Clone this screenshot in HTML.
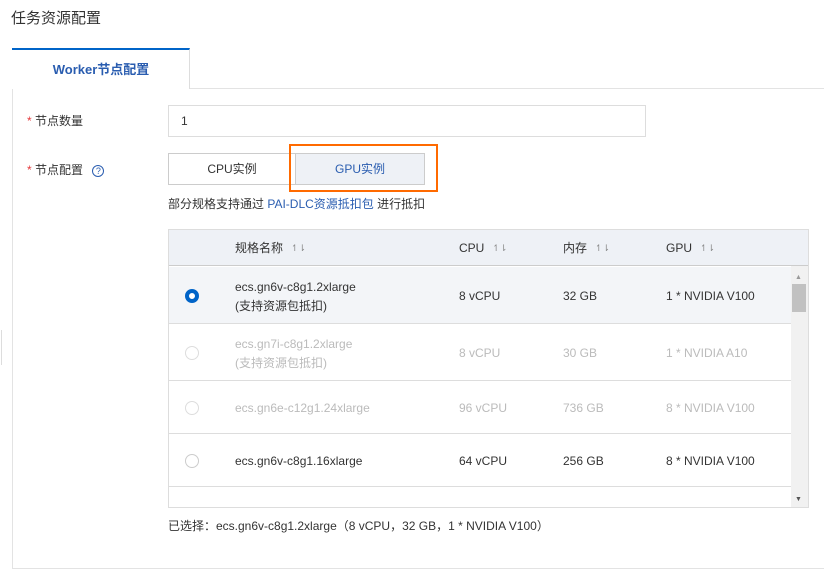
<!DOCTYPE html><html><head><meta charset="utf-8"><style>
*{box-sizing:border-box;margin:0;padding:0}
body{width:824px;height:577px;background:#fff;font-family:"Liberation Sans","Noto Sans CJK SC",sans-serif;font-size:12px;line-height:16px;color:#333;position:relative;overflow:hidden}
.a{position:absolute}
.t{white-space:nowrap}
.g{color:#bbb}
.radio{width:14px;height:14px;border:1px solid #ccc;border-radius:50%;position:absolute;left:185px;background:#fff}
.sort{font-size:9px;color:#888;margin-left:8px;font-family:"Liberation Sans",sans-serif;display:inline-block;vertical-align:top;line-height:16px}
.h{height:16px;line-height:16px}
</style></head><body>
<div class="a t" style="left:11px;top:9px;font-size:15px;line-height:20px;color:#333">任务资源配置</div>
<div class="a" style="left:12px;top:48px;width:178px;height:41px;border-top:2px solid #0064c8;border-right:1px solid #ddd;background:#fff;z-index:2"></div>
<div class="a t" style="left:12px;top:62px;width:178px;text-align:center;font-size:13px;font-weight:bold;color:#2a5db0;z-index:3">Worker节点配置</div>
<div class="a" style="left:190px;top:88px;width:640px;border-top:1px solid #e3e3e3"></div>
<div class="a" style="left:12px;top:48px;width:820px;height:521px;border-left:1px solid #e3e3e3;border-bottom:1px solid #e3e3e3"></div>
<div class="a" style="left:0;top:330px;width:2px;height:35px;border-right:1px solid #ddd"></div>
<div class="a t" style="left:27px;top:113px"><span style="color:#e4393c">*</span> 节点数量</div>
<div class="a" style="left:168px;top:105px;width:478px;height:32px;border:1px solid #ddd"></div>
<div class="a t" style="left:181px;top:113px">1</div>
<div class="a t" style="left:27px;top:162px"><span style="color:#e4393c">*</span> 节点配置 <span style="display:inline-block;width:12px;height:12px;border:1px solid #2a5db0;border-radius:50%;color:#2a5db0;font-size:9px;text-align:center;line-height:11px;margin-left:6px;vertical-align:middle">?</span></div>
<div class="a" style="left:168px;top:153px;width:128px;height:32px;border:1px solid #ccc;text-align:center;line-height:30px">CPU实例</div>
<div class="a" style="left:295px;top:153px;width:130px;height:32px;border:1px solid #ccc;background:#eef1f6;text-align:center;line-height:30px;color:#2a5db0">GPU实例</div>
<div class="a" style="left:289px;top:144px;width:149px;height:48px;border:2px solid #ff6a00"></div>
<div class="a t" style="left:168px;top:196px">部分规格支持通过 <span style="color:#2a5db0">PAI-DLC资源抵扣包</span> 进行抵扣</div>
<div class="a" style="left:168px;top:229px;width:641px;height:279px;border:1px solid #ddd"></div>
<div class="a" style="left:169px;top:230px;width:639px;height:36px;background:#eef1f6;border-bottom:1px solid #ccc"></div>
<div class="a t h" style="left:235px;top:240px">规格名称<span class="sort">↿⇂</span></div>
<div class="a t h" style="left:459px;top:240px">CPU<span class="sort">↿⇂</span></div>
<div class="a t h" style="left:563px;top:240px">内存<span class="sort">↿⇂</span></div>
<div class="a t h" style="left:666px;top:240px">GPU<span class="sort">↿⇂</span></div>
<div class="a" style="left:169px;top:267px;width:622px;height:56px;background:#f3f5f8"></div>
<div class="a" style="left:169px;top:323px;width:622px;border-top:1px solid #ddd"></div>
<div class="a" style="left:169px;top:380px;width:622px;border-top:1px solid #ddd"></div>
<div class="a" style="left:169px;top:433px;width:622px;border-top:1px solid #ddd"></div>
<div class="a" style="left:169px;top:486px;width:622px;border-top:1px solid #ddd"></div>
<div class="a" style="left:791px;top:266px;width:17px;height:241px;background:#f1f1f1"></div>
<div class="a" style="left:792px;top:284px;width:14px;height:28px;background:#c1c1c1"></div>
<div class="a" style="left:795px;top:270px;font-size:7px;color:#999">▲</div>
<div class="a" style="left:795px;top:492px;font-size:7px;color:#555">▼</div>
<div class="radio" style="top:289px;border:4px solid #0064c8"></div>
<div class="a t" style="left:235px;top:278px;line-height:19px">ecs.gn6v-c8g1.2xlarge<br>(支持资源包抵扣)</div>
<div class="a t" style="left:459px;top:288px">8 vCPU</div><div class="a t" style="left:563px;top:288px">32 GB</div><div class="a t" style="left:666px;top:288px">1 * NVIDIA V100</div>
<div class="radio" style="top:346px;border-color:#ddd"></div>
<div class="a t g" style="left:235px;top:335px;line-height:19px">ecs.gn7i-c8g1.2xlarge<br>(支持资源包抵扣)</div>
<div class="a t g" style="left:459px;top:345px">8 vCPU</div><div class="a t g" style="left:563px;top:345px">30 GB</div><div class="a t g" style="left:666px;top:345px">1 * NVIDIA A10</div>
<div class="radio" style="top:401px;border-color:#ddd"></div>
<div class="a t g" style="left:235px;top:400px">ecs.gn6e-c12g1.24xlarge</div>
<div class="a t g" style="left:459px;top:400px">96 vCPU</div><div class="a t g" style="left:563px;top:400px">736 GB</div><div class="a t g" style="left:666px;top:400px">8 * NVIDIA V100</div>
<div class="radio" style="top:454px"></div>
<div class="a t" style="left:235px;top:453px">ecs.gn6v-c8g1.16xlarge</div>
<div class="a t" style="left:459px;top:453px">64 vCPU</div><div class="a t" style="left:563px;top:453px">256 GB</div><div class="a t" style="left:666px;top:453px">8 * NVIDIA V100</div>
<div class="a t" style="left:168px;top:518px">已选择：ecs.gn6v-c8g1.2xlarge（8 vCPU，32 GB，1 * NVIDIA V100）</div>
</body></html>
